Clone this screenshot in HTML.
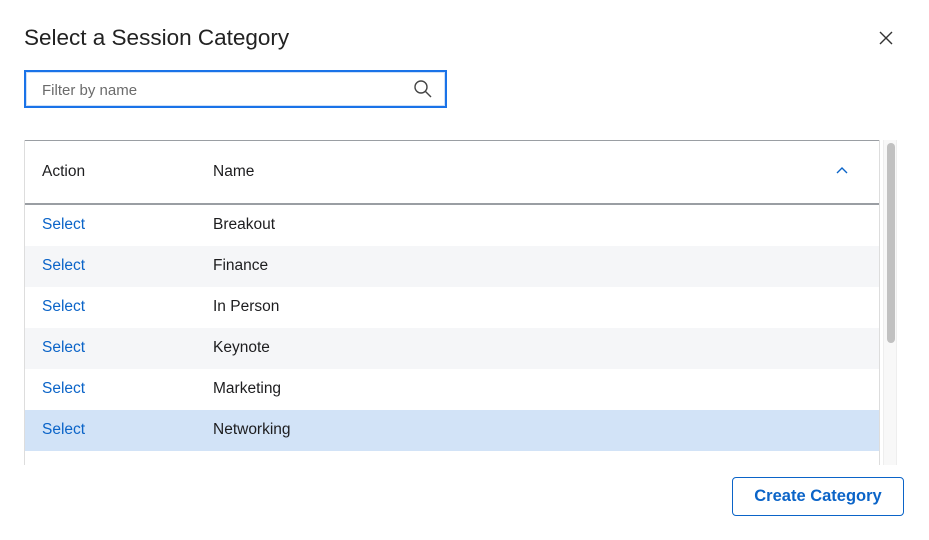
<!DOCTYPE html>
<html><head><style>
*{box-sizing:border-box;margin:0;padding:0}
body{width:929px;height:540px;background:#fff;font-family:"Liberation Sans",sans-serif;position:relative;overflow:hidden;color:#1d1d1f}
.title{position:absolute;left:24px;top:25px;font-size:22.5px;color:#222}
.close{position:absolute;left:878px;top:30px}
.search{position:absolute;left:24px;top:70px;width:423px;height:38px;border:2px solid #1a73e8;box-shadow:inset 0 0 0 1px #cfe0f7}
.search span{position:absolute;left:16px;top:10px;font-size:15px;color:#6b6b6b}
.search svg{position:absolute;right:12px;top:7px}
.table{position:absolute;left:24px;top:140px;width:856px;height:325px;overflow:hidden;border-left:1px solid #ddd;border-right:1px solid #ddd}
.head{height:65px;border:1px solid #9a9ea3;border-bottom:2px solid #9a9ea3;position:relative;margin-left:-1px;margin-right:-1px}
.head span{position:absolute;top:22px;font-size:15.5px}
.row{height:41px;position:relative;font-size:15.5px}
.row span{position:absolute;top:11px}
.a{left:17px;color:#0b64c8}
.n{left:188px}
.g{background:#f5f6f8}.h{background:#d2e3f7}
.sb{position:absolute;left:883px;top:140px;width:14px;height:325px;background:#f8f8f8;border-left:1px solid #eee;border-right:1px solid #eee}
.th{position:absolute;left:3px;top:3px;width:8px;height:200px;background:#c1c1c1;border-radius:4px}
.btn{position:absolute;left:732px;top:477px;width:172px;height:39px;border:1px solid #0b64c8;border-radius:4px;color:#0b64c8;font-size:16.5px;font-weight:bold;text-align:center;line-height:37px}
</style></head><body>
<div class="title">Select a Session Category</div>
<svg class="close" width="16" height="16" viewBox="0 0 16 16"><path d="M2 2L14 14M14 2L2 14" stroke="#333" stroke-width="1.4"/></svg>
<div class="search"><span>Filter by name</span>
<svg width="20" height="20" viewBox="0 0 20 20"><circle cx="8" cy="8" r="6" fill="none" stroke="#444" stroke-width="1.4"/><path d="M12.5 12.5L18 18" stroke="#444" stroke-width="1.4"/></svg></div>
<div class="table">
<div class="head"><span style="left:17px">Action</span><span style="left:188px">Name</span>
<svg style="position:absolute;left:811px;top:25px" width="12" height="8" viewBox="0 0 12 8"><path d="M1 7L6 2L11 7" fill="none" stroke="#0b64c8" stroke-width="1.4"/></svg></div>
<div class="row"><span class="a">Select</span><span class="n">Breakout</span></div>
<div class="row g"><span class="a">Select</span><span class="n">Finance</span></div>
<div class="row"><span class="a">Select</span><span class="n">In Person</span></div>
<div class="row g"><span class="a">Select</span><span class="n">Keynote</span></div>
<div class="row"><span class="a">Select</span><span class="n">Marketing</span></div>
<div class="row h"><span class="a">Select</span><span class="n">Networking</span></div>
<div class="row"></div>
</div>
<div class="sb"><div class="th"></div></div>
<div class="btn">Create Category</div>
</body></html>
